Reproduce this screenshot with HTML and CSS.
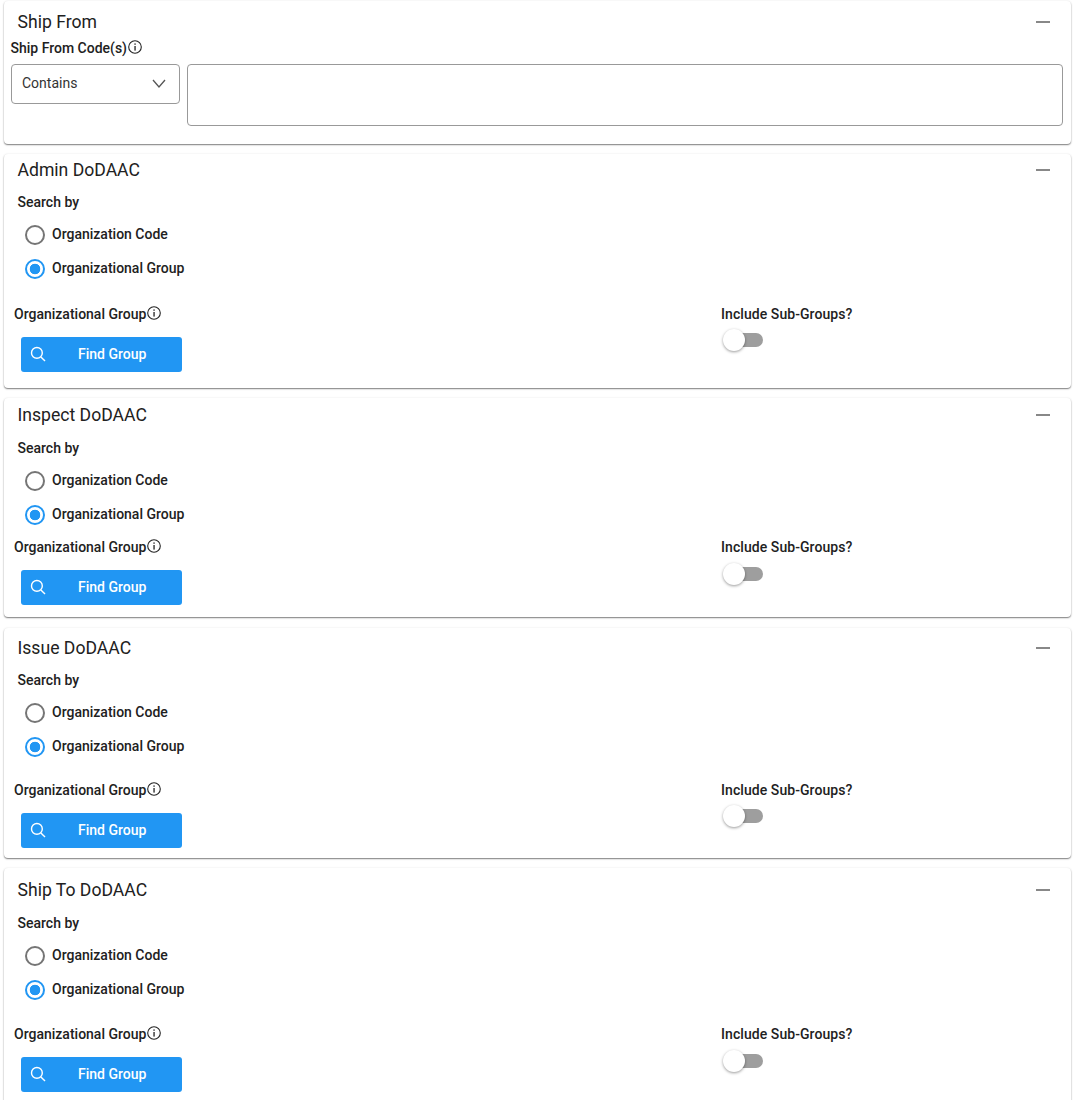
FILE: index.html
```html
<!DOCTYPE html>
<html lang="en">
<head>
<meta charset="utf-8">
<title>Search filters</title>
<link rel="stylesheet" href="styles.css">
</head>
<body>
<svg class="sprite" width="0" height="0" aria-hidden="true">
  <symbol id="info" viewBox="0 0 14 14">
    <circle cx="7" cy="7" r="6.3" fill="none" stroke="currentColor" stroke-width="1.1"/>
    <rect x="6.4" y="6" width="1.3" height="4.6" fill="currentColor"/>
    <rect x="6.4" y="3.4" width="1.3" height="1.4" fill="currentColor"/>
  </symbol>
  <symbol id="minus" viewBox="0 0 14 14">
    <path d="M0 7H14" fill="none" stroke="currentColor" stroke-width="1.4"/>
  </symbol>
  <symbol id="search" viewBox="0 0 16 16">
    <circle cx="6.9" cy="6.9" r="5.4" fill="none" stroke="currentColor" stroke-width="1.4"/>
    <path d="M10.9 10.9L15 15" fill="none" stroke="currentColor" stroke-width="1.4"/>
  </symbol>
</svg>
<main class="page">
  <section class="card card-ship">
    <header class="card-head"><h2>Ship From</h2><svg class="minus"><use href="#minus"/></svg></header>
    <div class="label code-label">Ship From Code(s)<svg class="info"><use href="#info"/></svg></div>
    <div class="code-row">
      <div class="select"><span>Contains</span>
        <svg class="chevron" viewBox="0 0 14 9"><path d="M1 1L7 8L13 1" fill="none" stroke="currentColor" stroke-width="1.3"/></svg>
      </div>
      <div class="textarea"></div>
    </div>
  </section>

  <section class="card card-admin">
    <header class="card-head"><h2>Admin DoDAAC</h2><svg class="minus"><use href="#minus"/></svg></header>
    <div class="label search-by">Search by</div>
    <div class="radio-row"><span class="radio"></span>Organization Code</div>
    <div class="radio-row"><span class="radio on"></span>Organizational Group</div>
    <div class="group-row">
      <div class="group-col"><div class="label">Organizational Group<svg class="info"><use href="#info"/></svg></div>
        <button class="find"><svg class="search"><use href="#search"/></svg><span>Find Group</span></button></div>
      <div class="sub-col"><div class="label">Include Sub-Groups?</div><div class="toggle"><span class="knob"></span></div></div>
    </div>
  </section>

  <section class="card card-inspect">
    <header class="card-head"><h2>Inspect DoDAAC</h2><svg class="minus"><use href="#minus"/></svg></header>
    <div class="label search-by">Search by</div>
    <div class="radio-row"><span class="radio"></span>Organization Code</div>
    <div class="radio-row"><span class="radio on"></span>Organizational Group</div>
    <div class="group-row">
      <div class="group-col"><div class="label">Organizational Group<svg class="info"><use href="#info"/></svg></div>
        <button class="find"><svg class="search"><use href="#search"/></svg><span>Find Group</span></button></div>
      <div class="sub-col"><div class="label">Include Sub-Groups?</div><div class="toggle"><span class="knob"></span></div></div>
    </div>
  </section>

  <section class="card card-issue">
    <header class="card-head"><h2>Issue DoDAAC</h2><svg class="minus"><use href="#minus"/></svg></header>
    <div class="label search-by">Search by</div>
    <div class="radio-row"><span class="radio"></span>Organization Code</div>
    <div class="radio-row"><span class="radio on"></span>Organizational Group</div>
    <div class="group-row">
      <div class="group-col"><div class="label">Organizational Group<svg class="info"><use href="#info"/></svg></div>
        <button class="find"><svg class="search"><use href="#search"/></svg><span>Find Group</span></button></div>
      <div class="sub-col"><div class="label">Include Sub-Groups?</div><div class="toggle"><span class="knob"></span></div></div>
    </div>
  </section>

  <section class="card card-shipto">
    <header class="card-head"><h2>Ship To DoDAAC</h2><svg class="minus"><use href="#minus"/></svg></header>
    <div class="label search-by">Search by</div>
    <div class="radio-row"><span class="radio"></span>Organization Code</div>
    <div class="radio-row"><span class="radio on"></span>Organizational Group</div>
    <div class="group-row">
      <div class="group-col"><div class="label">Organizational Group<svg class="info"><use href="#info"/></svg></div>
        <button class="find"><svg class="search"><use href="#search"/></svg><span>Find Group</span></button></div>
      <div class="sub-col"><div class="label">Include Sub-Groups?</div><div class="toggle"><span class="knob"></span></div></div>
    </div>
  </section>
</main>
</body>
</html>
```
FILE: styles.css
```css
* { box-sizing: border-box; }
html, body { margin: 0; height: 1100px; overflow: hidden; background: #fff; }
body { font-family: Roboto, "Liberation Sans", sans-serif; color: #212121; }
.sprite { position: absolute; }
.page { display: flex; flex-direction: column; padding: 1px 9px 0 4px; }
.card {
  background: #fff;
  border-radius: 4px;
  box-shadow: 0 1px 1.5px rgba(0,0,0,.5), 0 0 3px rgba(0,0,0,.05);
  display: flex;
  flex-direction: column;
  flex: none;
}
.card-ship { height: 143px; }
.card-admin { height: 234px; margin-top: 10px; }
.card-inspect { height: 219px; margin-top: 10px; }
.card-issue { height: 230px; margin-top: 11px; }
.card-shipto { height: 240px; margin-top: 10px; }

.card-head { display: flex; align-items: center; justify-content: space-between; height: 24px; padding: 0 21px 0 13.5px; flex: none; }
.card-ship .card-head { margin-top: 9px; }
.card-admin .card-head { margin-top: 4px; }
.card-inspect .card-head { margin-top: 5px; }
.card-issue .card-head { margin-top: 8px; }
.card-shipto .card-head { margin-top: 10px; }
h2 { margin: 0; font-size: 17.6px; font-weight: 400; line-height: 24px; color: #212121; }
.minus { width: 14px; height: 14px; color: #555; }

.label { font-size: 14px; font-weight: 500; line-height: 20px; height: 20px; display: flex; align-items: center; color: #212121; white-space: nowrap; }
.info { width: 14px; height: 14px; margin: -3px 0 0 1px; color: #222; flex: none; }

.code-label { margin: 4px 0 0 6.5px; }
.code-row { display: flex; gap: 7px; align-items: flex-start; margin: 6px 8px 0 7px; }
.select { width: 169px; height: 40px; border: 1px solid #999; border-radius: 4px; display: flex; align-items: center; justify-content: space-between; padding: 0 13px 2px 10px; font-size: 14px; color: #333; flex: none; }
.chevron { width: 14px; height: 9px; color: #555; }
.textarea { flex: 1; height: 62px; border: 1px solid #999; border-radius: 4px; }

.search-by { margin: 10px 0 0 13.5px; }
.card-inspect .search-by, .card-shipto .search-by { margin-top: 11px; }
.radio-row { display: flex; align-items: center; height: 34px; font-size: 14px; font-weight: 500; padding-left: 21px; gap: 7px; }
.search-by + .radio-row { margin-top: 5px; }
.radio { width: 20px; height: 20px; border: 2px solid #757575; border-radius: 50%; flex: none; position: relative; top: 1px; }
.radio.on { border-color: #2196f3; background: radial-gradient(circle, #2196f3 0 5px, #fff 5.6px); }

.group-row { display: flex; padding-left: 10px; }
.card-admin .group-row { margin-top: 19px; }
.card-inspect .group-row { margin-top: 6px; }
.card-issue .group-row { margin-top: 17px; }
.card-shipto .group-row { margin-top: 18px; }
.group-col { width: 707px; flex: none; }
.find {
  display: flex; align-items: center; width: 161px; height: 35px; margin: 13px 0 0 7px;
  padding: 0 0 2px 9px; border: 0; border-radius: 3px; background: #2196f3; color: #fff;
  font: 500 14px Roboto, "Liberation Sans", sans-serif;
}
.search { width: 16px; height: 16px; flex: none; }
.find span { margin-left: 32px; }
.sub-col .label { letter-spacing: .07px; }
.toggle { position: relative; width: 40px; height: 14px; margin: 9px 0 0 2px; }
.card-inspect .toggle, .card-shipto .toggle { margin-top: 10px; }
.toggle::before { content: ""; position: absolute; left: 10px; right: 0; top: 0; bottom: 0; background: #9e9e9e; border-radius: 7px; }
.knob { position: absolute; left: 0; top: -4px; width: 22px; height: 22px; border-radius: 50%; background: #fff; box-shadow: 0 1px 3px rgba(0,0,0,.4); }
```
